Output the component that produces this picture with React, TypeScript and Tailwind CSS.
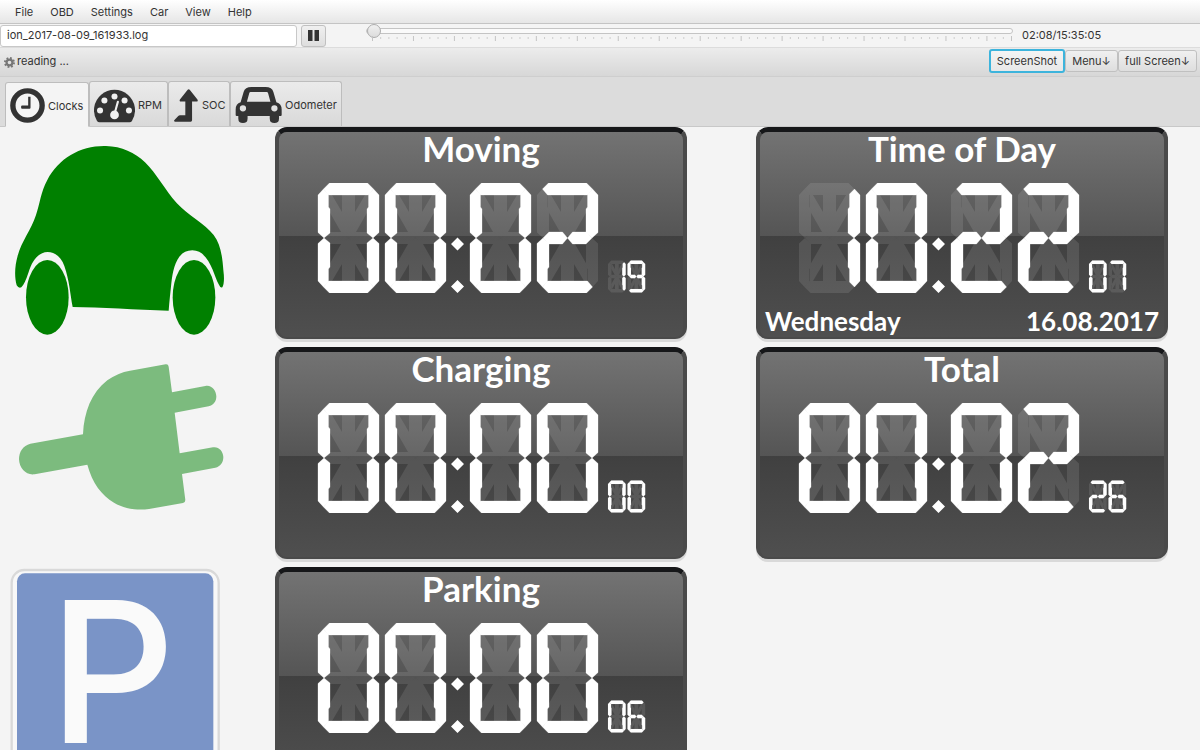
import type { ReactNode } from "react";

const SEGMENTS: Record<string, string> = {
  a: "5.5,6 11.5,0 49.5,0 55.5,6 50.5,12 10.5,12",
  b: "55.5,6 61,12 61,49.5 55,55 49,50 49,26 50.5,24 50.5,11",
  c: "55.5,104 61,98 61,60.5 55,55 49,60 49,84 50.5,86 50.5,99",
  d: "5.5,104 11.5,110 49.5,110 55.5,104 50.5,98 10.5,98",
  e: "5.5,104 0,98 0,60.5 6,55 12,60 12,84 10.5,86 10.5,99",
  f: "5.5,6 0,12 0,49.5 6,55 12,50 12,26 10.5,24 10.5,11",
  g: "6,55 12,49 25.5,49 30.5,55 25.5,61 12,61",
  h: "55,55 49,49 35.5,49 30.5,55 35.5,61 49,61",
};

const GHOST_INNER = [
  "24,12 37,12 37,49 30.5,55 24,49",
  "24,98 37,98 37,61 30.5,55 24,61",
  "11,12 14,12 24,29 30.5,55 23,49 11,28",
  "50,12 47,12 37,29 30.5,55 38,49 50,28",
  "11,98 14,98 24,81 30.5,55 23,61 11,82",
  "50,98 47,98 37,81 30.5,55 38,61 50,82",
];

const DIGITS: Record<string, string> = {
  "0": "abcdef",
  "1": "bc",
  "2": "abghed",
  "3": "abghcd",
  "4": "fghbc",
  "5": "afghcd",
  "6": "afghcde",
  "7": "abc",
  "8": "abcdefgh",
  "9": "abcdfgh",
};

function Digit({ value, transform }: { value: string; transform: string }) {
  return (
    <g transform={transform}>
      <g fill="#fff" opacity="0.1">
        {[...Object.values(SEGMENTS), ...GHOST_INNER].map((points) => (
          <polygon key={points} points={points} />
        ))}
      </g>
      <g fill="#fff" stroke="#fff" strokeWidth="0.3">
        {DIGITS[value].split("").map((name) => (
          <polygon key={name} points={SEGMENTS[name]} />
        ))}
      </g>
    </g>
  );
}

function Clock({ title, time, seconds, day, date }: { title: string; time: string; seconds: string; day?: string; date?: string }) {
  const starts = [0, 67, 152, 219];
  return (
    <section className="h-[212px] rounded-xl border-x-4 border-t-[5px] border-b-2 border-[#4a4a4a] border-t-[#161719] bg-[#4a4a4a] shadow-[0_3px_0_#d9d9d9]">
      <div className="flex h-full flex-col rounded-lg bg-[linear-gradient(#737373,#555555_50.5%,#404040_50.5%,#4f4f4f)] font-[Lato,sans-serif] font-bold text-white">
        <h2 className="text-center text-[35px] leading-8">{title}</h2>
        <svg viewBox="0 0 326 110" className="mt-[19px] h-[110px] w-full shrink-0" role="img" aria-label={`${time}:${seconds}`}>
          {time.replace(":", "").split("").map((value, i) => (
            <Digit key={i} value={value} transform={`translate(${starts[i]} 0)`} />
          ))}
          <path d="M139.500 54.500l6.500 6.500-6.500 6.500-6.500-6.500zM139.500 97l6.500 6.500-6.500 6.500-6.500-6.500z" fill="#fff" />
          {seconds.split("").map((value, i) => (
            <Digit key={i} value={value} transform={`translate(${290 + i * 19.5} 77.500) scale(0.29)`} />
          ))}
        </svg>
        {day && (
          <div className="mt-3 flex justify-between px-[5px] text-[26px] leading-8">
            <span>{day}</span>
            <span>{date}</span>
          </div>
        )}
      </div>
    </section>
  );
}

function CarPicture() {
  return (
    <svg viewBox="0 -9 825 645" className="w-full" fill="#008000" role="img" aria-label="Moving">
      <path d="M318 48C365 49 405 68 435 97C470 131 495 180 530 219C565 256 615 282 641 315C661 340 667 378 670 420Q675 458 667 472Q661 475 656 463C642 438 628 361 577 361C530 361 519 416 514 460C511 490 508 515 506 542C410 539 300 532 218 531C210 490 208 450 193 408C184 381 164 366 143 366C112 367 96 395 86 426Q74 463 64 472Q56 476 50 466C43 442 44 408 53 377C65 334 93 300 108 255C120 221 122 187 142 150C176 84 243 46 318 48Z" />
      <ellipse cx="142" cy="502" rx="64" ry="112" />
      <ellipse cx="582" cy="502" rx="64" ry="112" />
    </svg>
  );
}

function PlugPicture() {
  return (
    <svg viewBox="0 -9 825 645" className="w-full" fill="#7cbb7e" role="img" aria-label="Charging">
      <path d="M497 43Q505 42 506 50L516 127L616 108C635 104 648 121 649 139C649 155 640 166 626 169L524 188L539 310L639 292C656 289 669 303 670 321C670 338 661 350 646 353L546 372L556 450Q556 457 549 459L447 477C411 482 373 476 342 458C305 436 277 399 262 344L104 373C79 377 58 356 57 328C57 305 69 287 91 281L249 253C252 187 274 128 322 91Q354 68 390 62Z" />
    </svg>
  );
}

function ParkingPicture() {
  return (
    <svg viewBox="0 21 825 645" className="w-full" role="img" aria-label="Parking">
      <rect x="35" y="30" width="621" height="700" rx="38" fill="#f8f8f8" stroke="#d9d9d9" strokeWidth="7" />
      <rect x="51" y="40" width="589" height="690" rx="24" fill="#7a94c7" />
      <text x="147" y="550" fontSize="591" fontWeight="500" fill="#fafafa" className="font-[Inter,sans-serif]">P</text>
    </svg>
  );
}

const TABS: { label: string; width: string; icon: ReactNode }[] = [
  {
    label: "Clocks",
    width: "w-[84px]",
    icon: (
      <svg viewBox="32 264 104 104" className="size-[35px] shrink-0">
        <circle cx="84" cy="316" r="43.500" fill="none" stroke="#333" strokeWidth="16" />
        <path d="M68 316h18v-26h7v33q0 3-3 3H68q-3 0-3-3v-4q0-3 3-3z" fill="#333" />
      </svg>
    ),
  },
  {
    label: "RPM",
    width: "w-[79px]",
    icon: (
      <svg viewBox="284 266 122 104" className="h-[35px] w-[41px] shrink-0">
        <path d="M300 368Q296 368 293 364A61 61 0 1 1 397 364Q394 368 390 368Z" fill="#333" />
        <g fill="#f0f0f0">
          <circle cx="302" cy="333" r="9" />
          <circle cx="315" cy="303" r="9" />
          <circle cx="345" cy="291" r="9" />
          <circle cx="375" cy="303" r="9" />
          <circle cx="388" cy="333" r="9" />
          <circle cx="345" cy="346" r="13" />
          <path d="M352 306q1-3 4-2t2 4l-9 32-6-1z" />
        </g>
      </svg>
    ),
  },
  {
    label: "SOC",
    width: "w-[62px]",
    icon: (
      <svg viewBox="520 260 76 104" className="h-[35px] w-[26px] shrink-0">
        <path d="M563 265q3-3 6 0l23 29q3 6-3 6h-13v56q0 4-4 4h-47q-4-1-2-4l12-13q2-2 5-2h16v-41h-13q-6 0-3-6z" fill="#333" />
      </svg>
    ),
  },
  {
    label: "Odometer",
    width: "w-[112px]",
    icon: (
      <svg viewBox="705 262 142 113" className="h-[38px] w-[47px] shrink-0">
        <path fillRule="evenodd" d="M755 264h42q20 0 24 15l9 31q16 4 16 22v17q0 3-3 3h-5v7q0 14-14 14t-14-14v-7h-67v7q0 14-14 14t-14-14v-7h-5q-3 0-3-3v-17q0-18 15-22l9-31q4-15 24-15zM752 279q-3 0-4 4l-7 26h71l-7-26q-1-4-4-4zM729 319a9.500 9.500 0 1 0 0 19a9.500 9.500 0 1 0 0-19zM824 319a9.500 9.500 0 1 0 0 19a9.500 9.500 0 1 0 0-19z" fill="#333" />
      </svg>
    ),
  },
];

function Ticks() {
  return (
    <svg className="block h-1 w-full overflow-visible" aria-hidden="true">
      {Array.from({ length: 79 }, (_, i) => {
        const major = i % 5 === 0 || i === 78;
        return (
          <rect key={i} x={`${(i / 78) * 100}%`} y={major ? 0 : 1} width="1" height={major ? 5 : 2} fill={major ? "#c4c4c4" : "#cdcdcd"} />
        );
      })}
    </svg>
  );
}

const BUTTON = "h-[22px] rounded-[3px] border border-[#c0c0c0] bg-linear-to-b from-[#f0f0f0] to-[#dedede]";

export default function App() {
  return (
    <div className="flex h-screen flex-col overflow-hidden bg-[#f4f4f4] font-[Inter,sans-serif] text-[11px] leading-4 text-[#333]">
      <nav className="flex h-6 shrink-0 items-center gap-[17px] border-b border-[#c4c4c4] bg-linear-to-b from-white to-[#e6e6e6] px-[15px]">
        {["File", "OBD", "Settings", "Car", "View", "Help"].map((item) => (
          <button key={item} type="button">{item}</button>
        ))}
      </nav>

      <div className="flex h-[23px] shrink-0 items-center">
        <input aria-label="Log file" defaultValue="ion_2017-08-09_161933.log" className="h-[22px] w-[297px] rounded-[3px] border border-[#c8c8c8] bg-white px-[6px] pb-px" />
        <button type="button" aria-label="Pause" className={`${BUTTON} ml-1 flex w-[25px] items-center justify-center`}>
          <svg viewBox="0 0 11 11" className="size-[11px]" fill="#333">
            <path d="M0 0h4.500v11H0zM6.500 0H11v11H6.500z" />
          </svg>
        </button>
        <div className="ml-10 flex flex-1 flex-col self-start">
          <input
            type="range"
            aria-label="Position"
            min="0"
            max="56105"
            defaultValue="0"
            className="block h-[14px] w-full appearance-none bg-transparent [&::-webkit-slider-runnable-track]:h-[6px] [&::-webkit-slider-runnable-track]:rounded-full [&::-webkit-slider-runnable-track]:border [&::-webkit-slider-runnable-track]:border-[#c4c4c4] [&::-webkit-slider-runnable-track]:bg-[#fafafa] [&::-webkit-slider-thumb]:-mt-[5px] [&::-webkit-slider-thumb]:size-[14px] [&::-webkit-slider-thumb]:appearance-none [&::-webkit-slider-thumb]:rounded-full [&::-webkit-slider-thumb]:border [&::-webkit-slider-thumb]:border-[#adadad] [&::-webkit-slider-thumb]:bg-linear-to-b [&::-webkit-slider-thumb]:from-[#f0f0f0] [&::-webkit-slider-thumb]:to-[#dcdcdc]"
          />
          <div className="-mt-[2px] pr-[2px] pl-[6px]">
            <Ticks />
          </div>
        </div>
        <output className="ml-[9px] w-[178px] pb-px">02:08/15:35:05</output>
      </div>

      <div className="flex h-[30px] shrink-0 items-center border-y border-t-[#dcdcdc] border-b-[#cecece] bg-linear-to-b from-[#ececec] to-[#d7d7d7] pr-[3px] pb-[2px] pl-1">
        <svg viewBox="0 0 12 12" className="mt-[3px] mr-[2px] size-[11px]">
          <circle cx="6" cy="6" r="3.200" fill="none" stroke="#777" strokeWidth="2.400" />
          <circle cx="6" cy="6" r="4.900" fill="none" stroke="#777" strokeWidth="2.200" strokeDasharray="1.924 1.924" />
        </svg>
        <span className="flex-1">reading ...</span>
        <button type="button" className="h-6 w-[76px] rounded-[3px] border-2 border-[#3db4dc] bg-linear-to-b from-[#f4f4f4] to-[#e8e8e8]">ScreenShot</button>
        <button type="button" className={`${BUTTON} w-[53px]`}>Menu↓</button>
        <button type="button" className={`${BUTTON} w-[79px]`}>full Screen↓</button>
      </div>

      <div role="tablist" className="flex h-[50px] shrink-0 items-end border-b border-[#c8c8c8] bg-[#dcdcdc] pl-[5px]">
        {TABS.map((tab, i) => (
          <button
            key={tab.label}
            type="button"
            role="tab"
            aria-selected={i === 0}
            className={`flex h-[45px] items-center gap-[3px] rounded-t-[3px] border border-[#bdbdbd] pt-[2px] pl-1 ${tab.width} ${i === 0 ? "-mb-px border-b-[#f4f4f4] bg-[#f4f4f4]" : "border-b-0 bg-linear-to-b from-[#ebebeb] to-[#d9d9d9]"}`}
          >
            {tab.icon}
            {tab.label}
          </button>
        ))}
      </div>

      <main className="grid min-h-0 flex-1 auto-rows-[220px] grid-cols-[275fr_481fr_444fr] overflow-hidden">
        <CarPicture />
        <div className="pr-[69px]"><Clock title="Moving" time="00:02" seconds="19" /></div>
        <div className="pr-8"><Clock title="Time of Day" time="10:22" seconds="07" day="Wednesday" date="16.08.2017" /></div>
        <PlugPicture />
        <div className="pr-[69px]"><Clock title="Charging" time="00:00" seconds="00" /></div>
        <div className="pr-8"><Clock title="Total" time="00:02" seconds="26" /></div>
        <ParkingPicture />
        <div className="pr-[69px]"><Clock title="Parking" time="00:00" seconds="06" /></div>
      </main>
    </div>
  );
}
